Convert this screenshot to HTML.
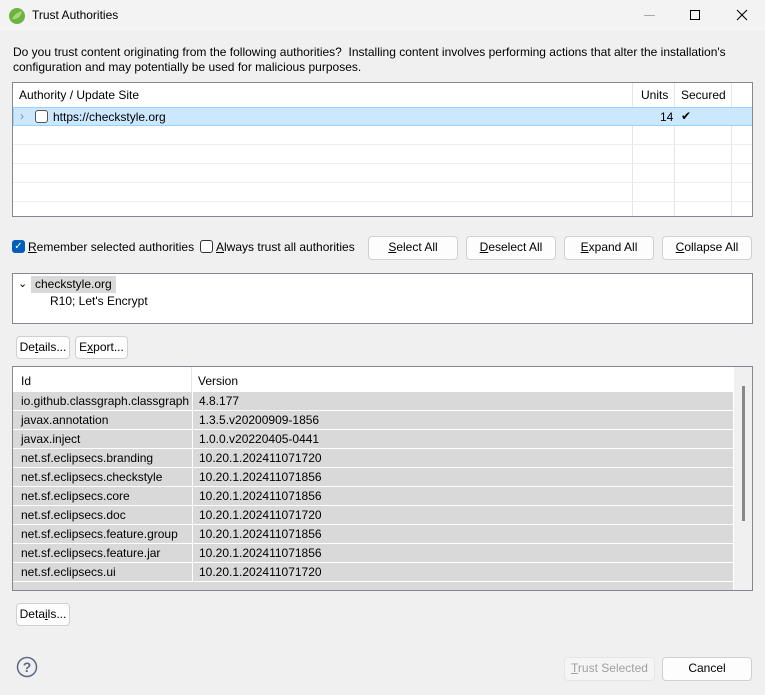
<!DOCTYPE html>
<html><head><style>
*{box-sizing:border-box;margin:0;padding:0}
body{width:765px;height:695px;background:#f0f0f0;font-family:"Liberation Sans",sans-serif;font-size:12px;color:#000;position:relative;overflow:hidden}
.a{position:absolute}
.btn{position:absolute;background:#fdfdfd;border:1px solid #d0d0d0;border-radius:4px;text-align:center;line-height:21px;font-size:12px}
.tb{position:absolute;background:#fff;border:1px solid #828790}
.row{position:absolute;left:0;height:18px;background:#d9d9d9;line-height:18px}
.cb{position:absolute;width:13px;height:13px;border:1px solid #333;border-radius:3px;background:#fff}
</style></head><body>
<div class="a" style="left:0;top:0;width:765px;height:31px;background:#f3f3f3"></div>
<svg class="a" style="left:8px;top:7px" width="18" height="18" viewBox="0 0 18 18"><circle cx="9" cy="9" r="8" fill="#6db33f"/><path d="M4 12c3-6 7-7 10-8-1 5-4 9-10 8z" fill="#a5d67a"/></svg>
<div class="a" style="left:32px;top:8px;font-size:12px">Trust Authorities</div>
<div class="a" style="left:644px;top:15px;width:11px;height:1px;background:#aaa"></div>
<div class="a" style="left:690px;top:10px;width:10px;height:10px;border:1px solid #000"></div>
<svg class="a" style="left:736px;top:9px" width="12" height="12" viewBox="0 0 12 12"><path d="M1 1L11 11M11 1L1 11" stroke="#000" stroke-width="1.1"/></svg>
<div class="a" style="left:13px;top:45px;line-height:15px;width:740px">Do you trust content originating from the following authorities?&nbsp; Installing content involves performing actions that alter the installation's configuration and may potentially be used for malicious purposes.</div>

<div class="tb" style="left:12px;top:82px;width:741px;height:135px;overflow:hidden">
 <div class="a" style="left:6px;top:5px">Authority / Update Site</div>
 <div class="a" style="left:628px;top:5px">Units</div>
 <div class="a" style="left:668px;top:5px">Secured</div>
 <div class="a" style="left:619px;top:0;width:1px;height:135px;background:#e5e5e5"></div>
 <div class="a" style="left:661px;top:0;width:1px;height:135px;background:#e5e5e5"></div>
 <div class="a" style="left:718px;top:0;width:1px;height:135px;background:#e5e5e5"></div>
 <div class="a" style="left:0;top:42px;width:741px;height:1px;background:#eee"></div>
 <div class="a" style="left:0;top:61px;width:741px;height:1px;background:#eee"></div>
 <div class="a" style="left:0;top:80px;width:741px;height:1px;background:#eee"></div>
 <div class="a" style="left:0;top:99px;width:741px;height:1px;background:#eee"></div>
 <div class="a" style="left:0;top:118px;width:741px;height:1px;background:#eee"></div>
 <div class="a" style="left:0;top:24px;width:740px;height:19px;background:#cce8ff;border:1px solid #99d1ff"></div>
 <div class="a" style="left:7px;top:26px;color:#888">›</div>
 <div class="cb" style="left:22px;top:27px;border-color:#555"></div>
 <div class="a" style="left:40px;top:27px">https://checkstyle.org</div>
 <div class="a" style="left:647px;top:27px">14</div>
 <div class="a" style="left:668px;top:26px">✔</div>
</div>

<div class="cb" style="left:12px;top:240px;background:#005fb8;border-color:#005fb8;color:#fff;font-size:10px;line-height:11px;text-align:center">✓</div>
<div class="a" style="left:28px;top:240px"><u>R</u>emember selected authorities</div>
<div class="cb" style="left:200px;top:240px"></div>
<div class="a" style="left:216px;top:240px"><u>A</u>lways trust all authorities</div>
<div class="btn" style="left:368px;top:236px;width:90px;height:24px"><u>S</u>elect All</div>
<div class="btn" style="left:466px;top:236px;width:90px;height:24px"><u>D</u>eselect All</div>
<div class="btn" style="left:564px;top:236px;width:90px;height:24px"><u>E</u>xpand All</div>
<div class="btn" style="left:662px;top:236px;width:90px;height:24px"><u>C</u>ollapse All</div>

<div class="tb" style="left:12px;top:273px;width:741px;height:51px">
 <div class="a" style="left:5px;top:3px;font-size:11px">⌄</div>
 <div class="a" style="left:18px;top:2px;background:#d9d9d9;padding:1px 4px;line-height:15px">checkstyle.org</div>
 <div class="a" style="left:37px;top:20px">R10; Let's Encrypt</div>
</div>

<div class="btn" style="left:16px;top:336px;width:54px;height:23px">De<u>t</u>ails...</div>
<div class="btn" style="left:75px;top:336px;width:53px;height:23px">E<u>x</u>port...</div>

<div class="tb" style="left:12px;top:366px;width:741px;height:225px;overflow:hidden">
 <div class="a" style="left:8px;top:7px">Id</div>
 <div class="a" style="left:185px;top:7px">Version</div>
 <div class="a" style="left:178px;top:0;width:1px;height:25px;background:#e5e5e5"></div>
 <div class="a" style="left:721px;top:0;width:20px;height:225px;background:#f0f0f0"></div>
 <div class="a" style="left:729px;top:19px;width:3px;height:135px;background:#888"></div>
 <div class="a" style="left:0;top:25px;width:720px;height:200px">
  <div class="row" style="top:0;width:720px"><span class="a" style="left:8px">io.github.classgraph.classgraph</span><span class="a" style="left:179px;border-left:1px solid #fff;padding-left:6px">4.8.177</span></div>
  <div class="row" style="top:19px;width:720px"><span class="a" style="left:8px">javax.annotation</span><span class="a" style="left:179px;border-left:1px solid #fff;padding-left:6px">1.3.5.v20200909-1856</span></div>
  <div class="row" style="top:38px;width:720px"><span class="a" style="left:8px">javax.inject</span><span class="a" style="left:179px;border-left:1px solid #fff;padding-left:6px">1.0.0.v20220405-0441</span></div>
  <div class="row" style="top:57px;width:720px"><span class="a" style="left:8px">net.sf.eclipsecs.branding</span><span class="a" style="left:179px;border-left:1px solid #fff;padding-left:6px">10.20.1.202411071720</span></div>
  <div class="row" style="top:76px;width:720px"><span class="a" style="left:8px">net.sf.eclipsecs.checkstyle</span><span class="a" style="left:179px;border-left:1px solid #fff;padding-left:6px">10.20.1.202411071856</span></div>
  <div class="row" style="top:95px;width:720px"><span class="a" style="left:8px">net.sf.eclipsecs.core</span><span class="a" style="left:179px;border-left:1px solid #fff;padding-left:6px">10.20.1.202411071856</span></div>
  <div class="row" style="top:114px;width:720px"><span class="a" style="left:8px">net.sf.eclipsecs.doc</span><span class="a" style="left:179px;border-left:1px solid #fff;padding-left:6px">10.20.1.202411071720</span></div>
  <div class="row" style="top:133px;width:720px"><span class="a" style="left:8px">net.sf.eclipsecs.feature.group</span><span class="a" style="left:179px;border-left:1px solid #fff;padding-left:6px">10.20.1.202411071856</span></div>
  <div class="row" style="top:152px;width:720px"><span class="a" style="left:8px">net.sf.eclipsecs.feature.jar</span><span class="a" style="left:179px;border-left:1px solid #fff;padding-left:6px">10.20.1.202411071856</span></div>
  <div class="row" style="top:171px;width:720px"><span class="a" style="left:8px">net.sf.eclipsecs.ui</span><span class="a" style="left:179px;border-left:1px solid #fff;padding-left:6px">10.20.1.202411071720</span></div>
  <div class="row" style="top:190px;width:720px"></div>
 </div>
</div>

<div class="btn" style="left:16px;top:603px;width:54px;height:23px">Deta<u>i</u>ls...</div>
<svg class="a" style="left:16px;top:656px" width="22" height="22" viewBox="0 0 22 22"><circle cx="11" cy="11" r="9.5" fill="none" stroke="#5a6a85" stroke-width="1.5"/><text x="11" y="16" text-anchor="middle" font-family="Liberation Sans" font-weight="bold" font-size="14" fill="#5a6a85">?</text></svg>
<div class="btn" style="left:564px;top:657px;width:91px;height:24px;background:#f5f5f5;border-color:#e5e5e5;color:#a0a0a0"><u>T</u>rust Selected</div>
<div class="btn" style="left:662px;top:657px;width:90px;height:24px">Cancel</div>
</body></html>
